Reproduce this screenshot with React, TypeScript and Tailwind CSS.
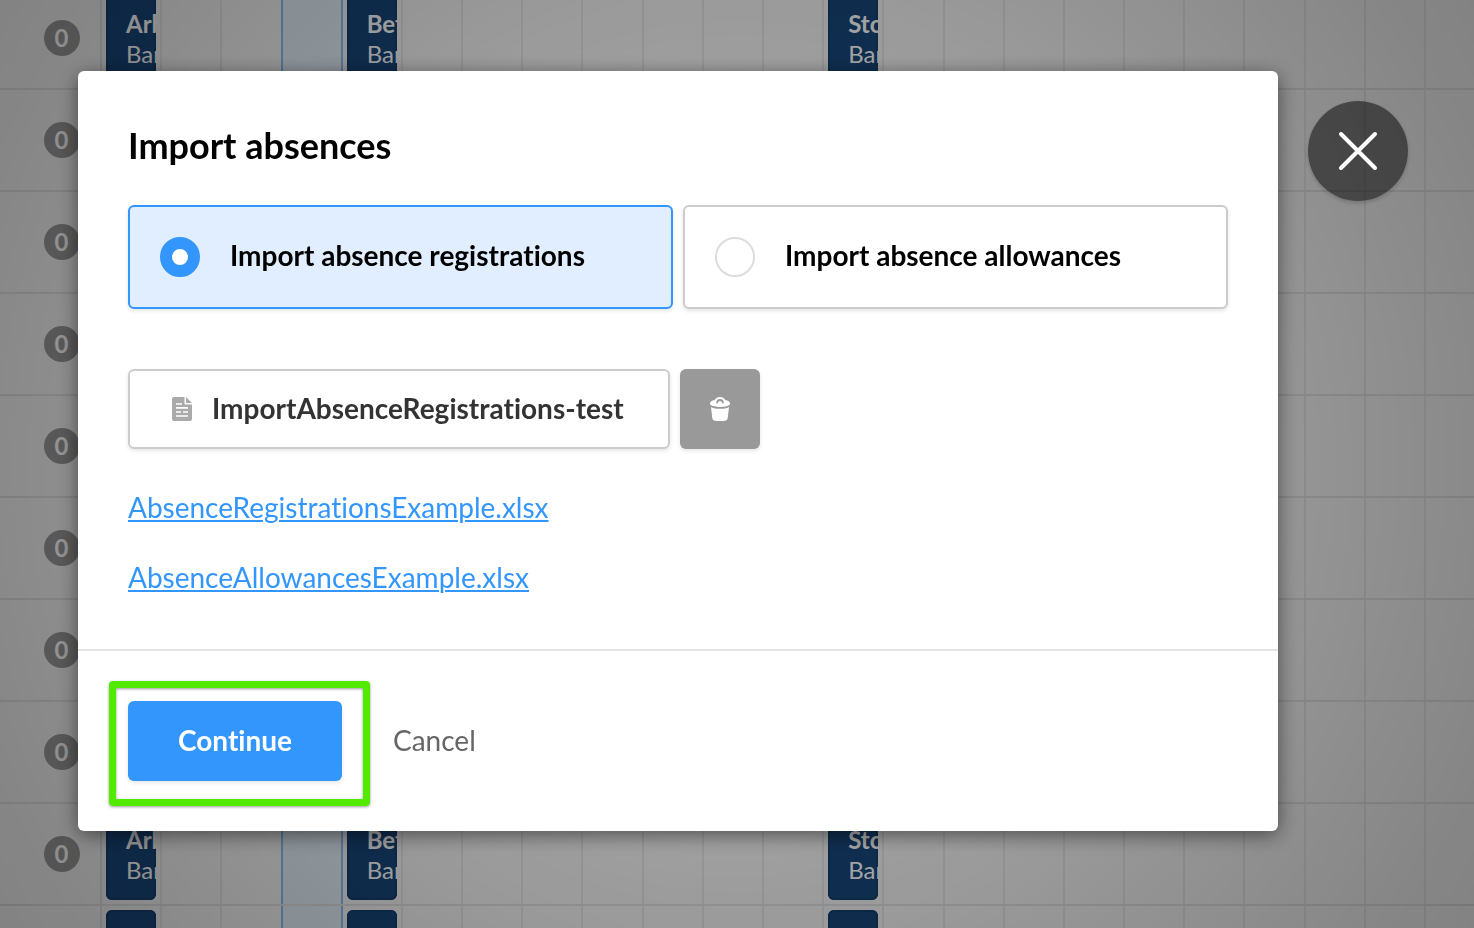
import { useState } from "react";

type Shift = {
  column: number;
  title: string;
  place: string;
};

const SHIFTS: Shift[] = [
  { column: 0, title: "Arb", place: "Bar" },
  { column: 4, title: "Bet", place: "Bar" },
  { column: 12, title: "Sto", place: "Bar" },
];

const COLUMNS = Array.from({ length: 23 }, (_, index) => index);
const TODAY = 3;

const ROWS = [
  { id: 0, shifts: true, labels: true },
  { id: 1, shifts: false, labels: false },
  { id: 2, shifts: false, labels: false },
  { id: 3, shifts: false, labels: false },
  { id: 4, shifts: false, labels: false },
  { id: 5, shifts: false, labels: false },
  { id: 6, shifts: false, labels: false },
  { id: 7, shifts: false, labels: false },
  { id: 8, shifts: true, labels: true },
];

const OPTIONS = [
  { value: "registrations", label: "Import absence registrations" },
  { value: "allowances", label: "Import absence allowances" },
];

const EXAMPLES = ["AbsenceRegistrationsExample.xlsx", "AbsenceAllowancesExample.xlsx"];

function FileIcon() {
  return (
    <svg viewBox="0 0 20 24" className="h-6 w-5 shrink-0" aria-hidden="true">
      <path
        fill="#aaaaaa"
        d="M2 0h10.500v7.500H20V22a2 2 0 0 1-2 2H2a2 2 0 0 1-2-2V2a2 2 0 0 1 2-2zM14 0l6 6h-6z"
      />
      <path
        stroke="#ffffff"
        strokeWidth="1.700"
        d="M4 7h6M4 10.800h12M4 15h5M11 15h5M4 19h12"
      />
    </svg>
  );
}

function TrashIcon() {
  return (
    <svg viewBox="0 0 20 24" className="h-6 w-5" aria-hidden="true">
      <path
        fill="#ffffff"
        d="M0 6.200C0 4.600 2 3.400 4.600 2.900 6 1 7.600 0 10 0s4 1 5.400 2.900C18 3.400 20 4.600 20 6.200v1.100C18.500 9.300 14.500 10 10 10S1.500 9.300 0 7.300zM1 9.900c2.300 1.400 5.500 1.900 9 1.900s6.700-.5 9-1.900l-1.300 11.300C17.400 23.200 15.500 24 10 24s-7.400-.8-7.700-2.800z"
      />
      <path
        fill="none"
        stroke="#999999"
        strokeWidth="1.800"
        strokeLinecap="round"
        d="M7.200 5.500C7.300 3.700 8.400 3 10 3s2.700.7 2.800 2.500"
      />
    </svg>
  );
}

function ScheduleRow({ shifts, labels }: { shifts: boolean; labels: boolean }) {
  return (
    <div className="grid h-[102px] grid-cols-[102px_repeat(22,minmax(0,1fr))_48px] border-b-2 border-[#e0e0e0]">
      <div className="flex items-center justify-end border-r-2 border-[#e0e0e0] pr-5">
        {labels || !shifts ? (
          <span className="flex size-9 items-center justify-center rounded-full bg-[#999999] pr-px text-2xl font-bold text-white">
            0
          </span>
        ) : null}
      </div>
      {COLUMNS.map((column) => {
        const shift = shifts ? SHIFTS.find((item) => item.column === column) : undefined;
        const border =
          column === TODAY || column === TODAY - 1 ? "border-[#8cbdf5]" : "border-[#e5e5e5]";

        return (
          <div
            key={column}
            className={`min-w-0 border-r-2 p-1 last:border-r-0 ${border} ${
              column === TODAY ? "bg-[#e5f1fb]" : ""
            }`}
          >
            {shift ? (
              <div className="h-[92px] overflow-hidden rounded-md bg-[#18477a] py-[17px] pl-5 text-2xl leading-[30px] text-white shadow-[inset_0_0_0_2px_#143f6d]">
                {labels ? (
                  <>
                    <p className="font-bold">{shift.title}</p>
                    <p>{shift.place}</p>
                  </>
                ) : null}
              </div>
            ) : null}
          </div>
        );
      })}
    </div>
  );
}

export default function App() {
  const [kind, setKind] = useState("registrations");

  return (
    <div className="h-screen overflow-hidden bg-[#f5f5f5] font-['Lato',sans-serif] text-[28px] leading-10 text-black [font-variant-ligatures:none]">
      <div className="-mt-3">
        {ROWS.map((row) => (
          <ScheduleRow key={row.id} shifts={row.shifts} labels={row.labels} />
        ))}
        <ScheduleRow shifts labels={false} />
      </div>

      <div className="fixed inset-0 flex items-start gap-[30px] bg-[radial-gradient(circle_at_center,rgba(0,0,0,0.25),rgba(0,0,0,0.47))] pt-[71px] pr-[66px] pl-[78px]">
        <div
          role="dialog"
          aria-labelledby="import-title"
          className="min-w-0 flex-1 rounded-md bg-white shadow-[0_4px_20px_rgba(0,0,0,0.5)]"
        >
          <div className="px-[50px] pt-[50px] pb-[52px]">
            <h1 id="import-title" className="text-4xl leading-12 font-bold">
              Import absences
            </h1>

            <div className="mt-9 grid grid-cols-2 gap-[10px]">
              {OPTIONS.map((option) => (
                <label
                  key={option.value}
                  className={`flex h-[104px] items-center gap-[30px] rounded-md border-2 px-[30px] font-bold shadow-[0_2px_4px_rgba(0,0,0,0.1)] ${
                    kind === option.value
                      ? "border-[#3396fc] bg-[#e1eeff]"
                      : "border-[#cccccc] bg-white"
                  }`}
                >
                  <input
                    type="radio"
                    name="kind"
                    value={option.value}
                    checked={kind === option.value}
                    onChange={() => setKind(option.value)}
                    className="size-10 shrink-0 appearance-none rounded-full border-2 border-[#dddddd] bg-white checked:border-[12px] checked:border-[#3396fc]"
                  />
                  <span className="pb-1">{option.label}</span>
                </label>
              ))}
            </div>

            <div className="mt-[60px] flex gap-[10px]">
              <div className="flex h-20 items-center gap-5 rounded-md border-2 border-[#cccccc] pr-11 pl-[42px] font-bold text-[#333333] shadow-[0_2px_4px_rgba(0,0,0,0.1)]">
                <FileIcon />
                <span className="pb-0.5">ImportAbsenceRegistrations-test</span>
              </div>
              <button
                type="button"
                aria-label="Remove file"
                className="flex size-20 items-center justify-center rounded-md bg-[#999999] shadow-[0_2px_4px_rgba(0,0,0,0.1)]"
              >
                <TrashIcon />
              </button>
            </div>

            <ul className="mt-[38px] space-y-[30px]">
              {EXAMPLES.map((name) => (
                <li key={name}>
                  <a
                    href={`#${name}`}
                    className="text-[#3396fc] underline decoration-2 underline-offset-2"
                  >
                    {name}
                  </a>
                </li>
              ))}
            </ul>
          </div>

          <div className="flex items-start gap-[23px] border-t-2 border-[#e5e5e5] px-[31px] pt-[30px] pb-[25px]">
            <div className="rounded-sm border-[7px] border-[#52ea00] pt-[13px] pr-[21px] pb-[18px] pl-3 shadow-[0_1px_3px_rgba(0,0,0,0.4),inset_0_1px_3px_rgba(0,0,0,0.4)]">
              <button
                type="button"
                className="block h-20 rounded-md bg-[#3396fc] px-[50px] pb-0.5 font-bold text-white shadow-[0_2px_4px_rgba(0,0,0,0.1)]"
              >
                Continue
              </button>
            </div>
            <button type="button" className="mt-5 h-20 pb-0.5 text-[#666666]">
              Cancel
            </button>
          </div>
        </div>

        <button
          type="button"
          aria-label="Close"
          className="mt-[30px] flex size-[100px] shrink-0 items-center justify-center rounded-full bg-black/50 shadow-[0_2px_4px_rgba(0,0,0,0.2)]"
        >
          <svg viewBox="0 0 40 40" className="size-10" aria-hidden="true">
            <path
              stroke="#ffffff"
              strokeWidth="4"
              strokeLinecap="round"
              d="M3 3l34 34M37 3L3 37"
            />
          </svg>
        </button>
      </div>
    </div>
  );
}
